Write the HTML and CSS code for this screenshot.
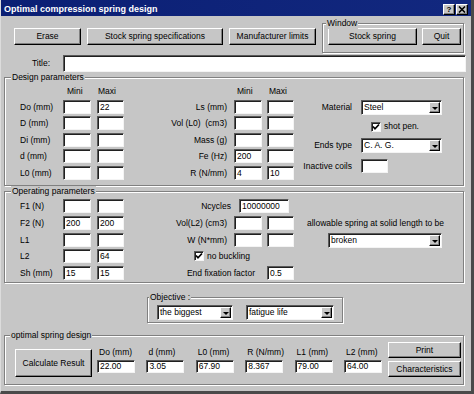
FILE: index.html
```html
<!DOCTYPE html>
<html>
<head>
<meta charset="utf-8">
<link rel="stylesheet" href="styles.css">
</head>
<body>
<div class="window">
  <div class="titlebar">
    <span class="title">Optimal compression spring design</span>
    <span class="tb-btn tb-help">?</span>
    <span class="tb-btn tb-close"><svg width="8" height="7" viewBox="0 0 8 7"><path d="M1 0.5 L7 6.5 M7 0.5 L1 6.5" stroke="#000" stroke-width="1.6" fill="none"/></svg></span>
  </div>
  <div class="client">
    <div class="toprow">
      <button class="btn b-erase">Erase</button>
      <button class="btn b-specs">Stock spring specifications</button>
      <button class="btn b-limits">Manufacturer limits</button>
      <div class="group g-window">
        <span class="legend lg-window">Window</span>
        <button class="btn b-stock">Stock spring</button>
        <button class="btn b-quit">Quit</button>
      </div>
    </div>

    <div class="titlerow">
      <span class="title-label">Title:</span>
      <span class="field f-title"></span>
    </div>

    <div class="group g-design">
      <span class="legend">Design parameters</span>
      <div class="params p-design">
        <span></span><span class="hdr h-mini">Mini</span><span class="hdr h-maxi">Maxi</span>
        <span></span><span class="hdr h-mini2">Mini</span><span class="hdr h-maxi2">Maxi</span>

        <span class="lbl">Do (mm)</span><span class="field"></span><span class="field fx">22</span>
        <span class="rlbl">Ls (mm)</span><span class="field"></span><span class="field fx"></span>

        <span class="lbl">D (mm)</span><span class="field"></span><span class="field fx"></span>
        <span class="rlbl">Vol (L0)&nbsp; (cm3)</span><span class="field"></span><span class="field fx"></span>

        <span class="lbl">Di (mm)</span><span class="field"></span><span class="field fx"></span>
        <span class="rlbl">Mass (g)</span><span class="field"></span><span class="field fx"></span>

        <span class="lbl">d (mm)</span><span class="field"></span><span class="field fx"></span>
        <span class="rlbl">Fe (Hz)</span><span class="field">200</span><span class="field fx"></span>

        <span class="lbl">L0 (mm)</span><span class="field"></span><span class="field fx"></span>
        <span class="rlbl">R (N/mm)</span><span class="field">4</span><span class="field fx">10</span>
      </div>
      <div class="mat">
        <span class="mlbl">Material</span>
        <div class="combo c-mat"><span class="ctext">Steel</span><span class="carrow"></span></div>
        <span></span>
        <span class="chkrow"><span class="chk"><svg width="8" height="8" viewBox="0 0 8 8"><path d="M1 3.5 L3 5.8 L7 1.5" stroke="#000" stroke-width="1.7" fill="none"/></svg></span>shot pen.</span>
        <span class="mlbl">Ends type</span>
        <div class="combo c-mat"><span class="ctext">C. A. G.</span><span class="carrow"></span></div>
        <span class="mlbl">Inactive coils</span>
        <span class="field fx"></span>
      </div>
    </div>

    <div class="group g-oper">
      <span class="legend">Operating parameters</span>
      <div class="params p-oper">
        <span class="lbl">F1 (N)</span><span class="field"></span><span class="field fx"></span>
        <span class="rlbl nc">Ncycles</span><span class="field f-nc">10000000</span>

        <span class="lbl">F2 (N)</span><span class="field">200</span><span class="field fx">200</span>
        <span class="rlbl">Vol(L2) (cm3)</span><span class="field"></span><span class="field fx"></span>

        <span class="lbl">L1</span><span class="field"></span><span class="field fx"></span>
        <span class="rlbl">W (N*mm)</span><span class="field"></span><span class="field fx"></span>

        <span class="lbl">L2</span><span class="field"></span><span class="field fx">64</span>
        <span class="buck"><span class="chk"><svg width="8" height="8" viewBox="0 0 8 8"><path d="M1 3.5 L3 5.8 L7 1.5" stroke="#000" stroke-width="1.7" fill="none"/></svg></span>no buckling</span>

        <span class="lbl">Sh (mm)</span><span class="field">15</span><span class="field fx">15</span>
        <span class="rlbl efl">End fixation factor</span><span class="field fx">0.5</span>
      </div>
      <div class="allow">
        <span class="allow-text">allowable spring at solid length to be</span>
        <div class="combo c-broken"><span class="ctext">broken</span><span class="carrow"></span></div>
      </div>
    </div>

    <div class="group g-obj">
      <span class="legend lg-obj">Objective :</span>
      <div class="combo c-big"><span class="ctext">the biggest</span><span class="carrow"></span></div>
      <div class="combo c-fat"><span class="ctext">fatigue life</span><span class="carrow"></span></div>
    </div>

    <div class="group g-opt">
      <span class="legend lg-opt">optimal spring design</span>
      <button class="btn calc">Calculate Result</button>
      <div class="rcol first"><span class="rhdr">Do (mm)</span><span class="field rf">22.00</span></div>
      <div class="rcol"><span class="rhdr">d (mm)</span><span class="field rf">3.05</span></div>
      <div class="rcol"><span class="rhdr">L0 (mm)</span><span class="field rf">67.90</span></div>
      <div class="rcol"><span class="rhdr">R (N/mm)</span><span class="field rf">8.367</span></div>
      <div class="rcol"><span class="rhdr">L1 (mm)</span><span class="field rf">79.00</span></div>
      <div class="rcol"><span class="rhdr">L2 (mm)</span><span class="field rf">64.00</span></div>
      <div class="pcol">
        <button class="btn pbtn">Print</button>
        <button class="btn pbtn pbtn2">Characteristics</button>
      </div>
    </div>
  </div>
</div>
</body>
</html>
```

FILE: styles.css
```css
html, body {
  margin: 0;
  padding: 0;
  background: #c6c6c6;
}

body {
  font-family: "Liberation Sans", Arial, sans-serif;
  font-size: 8.5px;
  line-height: 11px;
  color: #000;
}

.window {
  width: 474px;
  height: 394px;
  box-sizing: border-box;
  border-left: 1px solid #dcdcdc;
  border-right: 3px solid #4a4a4a;
  border-bottom: 3px solid #4a4a4a;
  background: #c6c6c6;
  overflow: hidden;
}

/* title bar */
.titlebar {
  height: 16px;
  display: flex;
  align-items: flex-start;
  background: linear-gradient(90deg, #0b1f74, #12287f);
  padding: 0 3px 0 3px;
}

.title {
  flex: 1;
  color: #fff;
  font-weight: bold;
  font-size: 9px;
  line-height: 11px;
  padding-top: 4px;
}

.tb-btn {
  width: 12px;
  height: 11px;
  margin-top: 4px;
  box-sizing: border-box;
  background: #c6c6c6;
  border: 1px solid;
  border-color: #fff #000 #000 #fff;
  box-shadow: inset -1px -1px 0 #808080;
  display: flex;
  align-items: center;
  justify-content: center;
  font-weight: bold;
  font-size: 8px;
  line-height: 9px;
}

.tb-close {
  margin-left: 1px;
}

/* client */
.client {
  padding-left: 3px;
}

.btn {
  font: inherit;
  color: #000;
  background: #c6c6c6;
  box-sizing: border-box;
  height: 17px;
  padding: 0;
  margin: 0;
  border: 1px solid;
  border-color: #fff #000 #000 #fff;
  box-shadow: inset -1px -1px 0 #808080;
  white-space: nowrap;
}

.group {
  position: relative;
  box-sizing: border-box;
  border: 1px solid #808080;
  box-shadow: inset 1px 1px 0 #fff, 1px 1px 0 #fff;
}

.legend {
  position: absolute;
  top: -6px;
  left: 6px;
  padding: 0 1px;
  background: #c6c6c6;
  line-height: 11px;
  white-space: nowrap;
}

.field {
  display: block;
  box-sizing: border-box;
  width: 28px;
  height: 14px;
  background: #fff;
  border: 1px solid;
  border-color: #5a5a5a #f4f4f4 #f4f4f4 #5a5a5a;
  box-shadow: inset 1px 1px 0 #202020;
  padding-left: 2px;
  line-height: 12px;
  white-space: nowrap;
  overflow: hidden;
}

.fx {
  width: 27px;
}

/* top row */
.toprow {
  display: flex;
  align-items: flex-start;
  margin-top: 7px;
}

.toprow > .btn {
  margin-top: 5px;
}

.b-erase { margin-left: 10px; width: 67px; }
.b-specs { margin-left: 6px; width: 136px; }
.b-limits { margin-left: 6px; width: 87px; }

.g-window {
  margin-left: 6px;
  width: 142px;
  height: 30px;
  display: flex;
  align-items: flex-start;
  padding: 4px 0 0 5px;
}

.lg-window { left: 3px; }

.b-stock { width: 89px; }
.b-quit { width: 39px; margin-left: 5px; }

/* title row */
.titlerow {
  display: flex;
  align-items: center;
  margin-top: 2px;
  height: 17px;
}

.title-label {
  width: 46px;
  text-align: right;
  margin-right: 13px;
}

.f-title {
  width: 403px;
  height: 17px;
}

/* design parameters */
.g-design {
  margin-top: 5px;
  width: 460px;
  height: 109px;
  padding: 8px 0 0 15px;
  display: flex;
  align-items: flex-start;
}

.params {
  display: grid;
  grid-template-columns: 43px 34px 27px 110px 33px 27px;
  align-items: center;
}

.p-design {
  grid-template-rows: 11px repeat(5, 14px);
  row-gap: 2.5px;
}

.hdr { line-height: 11px; }
.h-mini { padding-left: 4px; }
.h-maxi { padding-left: 1px; }
.h-mini2 { padding-left: 3px; }
.h-maxi2 { padding-left: 2px; }

.lbl {
  white-space: nowrap;
  line-height: 14px;
}

.rlbl {
  text-align: right;
  padding-right: 7px;
  white-space: nowrap;
  line-height: 14px;
}

.mat {
  margin-top: 14px;
  display: grid;
  grid-template-columns: 57px 81px;
  grid-template-rows: 15px 11px 15px 14px;
  column-gap: 10px;
  row-gap: 6px;
  align-items: center;
}

.mat > .fx {
  width: 27px;
}

.mlbl {
  text-align: right;
  white-space: nowrap;
  margin-right: -1px;
}

.chkrow, .buck {
  display: flex;
  align-items: center;
  white-space: nowrap;
}

.chkrow {
  padding-left: 10px;
}

.chk {
  width: 10px;
  height: 10px;
  box-sizing: border-box;
  background: #fff;
  border: 1px solid;
  border-color: #5a5a5a #f4f4f4 #f4f4f4 #5a5a5a;
  box-shadow: inset 1px 1px 0 #202020;
  display: flex;
  align-items: center;
  justify-content: center;
  margin-right: 3px;
}

/* combos */
.combo {
  display: flex;
  align-items: center;
  box-sizing: border-box;
  height: 15px;
  background: #fff;
  border: 1px solid;
  border-color: #5a5a5a #f4f4f4 #f4f4f4 #5a5a5a;
  box-shadow: inset 1px 1px 0 #202020;
}

.ctext {
  flex: 1;
  padding-left: 2px;
  white-space: nowrap;
}

.carrow {
  width: 11px;
  height: 11px;
  margin-right: 1px;
  box-sizing: border-box;
  background: #c6c6c6;
  border: 1px solid;
  border-color: #fff #000 #000 #fff;
  box-shadow: inset -1px -1px 0 #808080;
  display: flex;
  align-items: center;
  justify-content: center;
}

.carrow::after {
  content: "";
  width: 0;
  height: 0;
  border-left: 3px solid transparent;
  border-right: 3px solid transparent;
  border-top: 3px solid #000;
  margin-top: 1px;
}

.c-mat { width: 81px; }

/* operating parameters */
.g-oper {
  margin-top: 5px;
  width: 460px;
  height: 92px;
  padding: 7px 0 0 15px;
  display: flex;
  align-items: flex-start;
}

.p-oper {
  grid-template-rows: repeat(5, 14px);
  row-gap: 2.75px;
}

.nc { padding-right: 3px; }

.f-nc {
  grid-column: 5 / 7;
  width: 50px;
  margin-left: 5px;
}

.buck {
  grid-column: 4 / 7;
  padding-left: 70px;
}

.efl {
  grid-column: 4 / 6;
  padding-right: 12px;
}

.allow {
  display: flex;
  flex-direction: column;
  align-items: flex-start;
  padding-top: 19px;
}

.allow-text {
  margin-left: 13px;
  white-space: nowrap;
}

.c-broken {
  margin-left: 34px;
  margin-top: 4px;
  width: 114px;
}

/* objective */
.g-obj {
  margin-top: 14px;
  margin-left: 143px;
  width: 196px;
  height: 26px;
  padding: 7px 0 0 9px;
  display: flex;
  align-items: flex-start;
}

.lg-obj { left: 1px; }

.c-big { width: 76px; }
.c-fat { width: 88px; margin-left: 13px; }

/* optimal spring design */
.g-opt {
  margin-top: 12px;
  width: 460px;
  height: 50px;
  padding-left: 10px;
  display: flex;
  align-items: flex-start;
}

.lg-opt { left: 5px; }

.calc {
  width: 77px;
  height: 28px;
  margin-top: 13px;
}

.rcol {
  width: 38px;
  margin-left: 11.4px;
  margin-top: 11px;
  display: flex;
  flex-direction: column;
}

.rcol.first { margin-left: 5px; }

.rhdr {
  padding-left: 2px;
  white-space: nowrap;
  line-height: 11px;
}

.rf {
  width: 38px;
  height: 13px;
  margin-top: 2px;
  line-height: 11px;
}

.pcol {
  margin-left: 6px;
  margin-top: 6px;
  display: flex;
  flex-direction: column;
}

.pbtn {
  width: 73px;
  height: 16px;
}

.pbtn2 { margin-top: 3px; }
```
